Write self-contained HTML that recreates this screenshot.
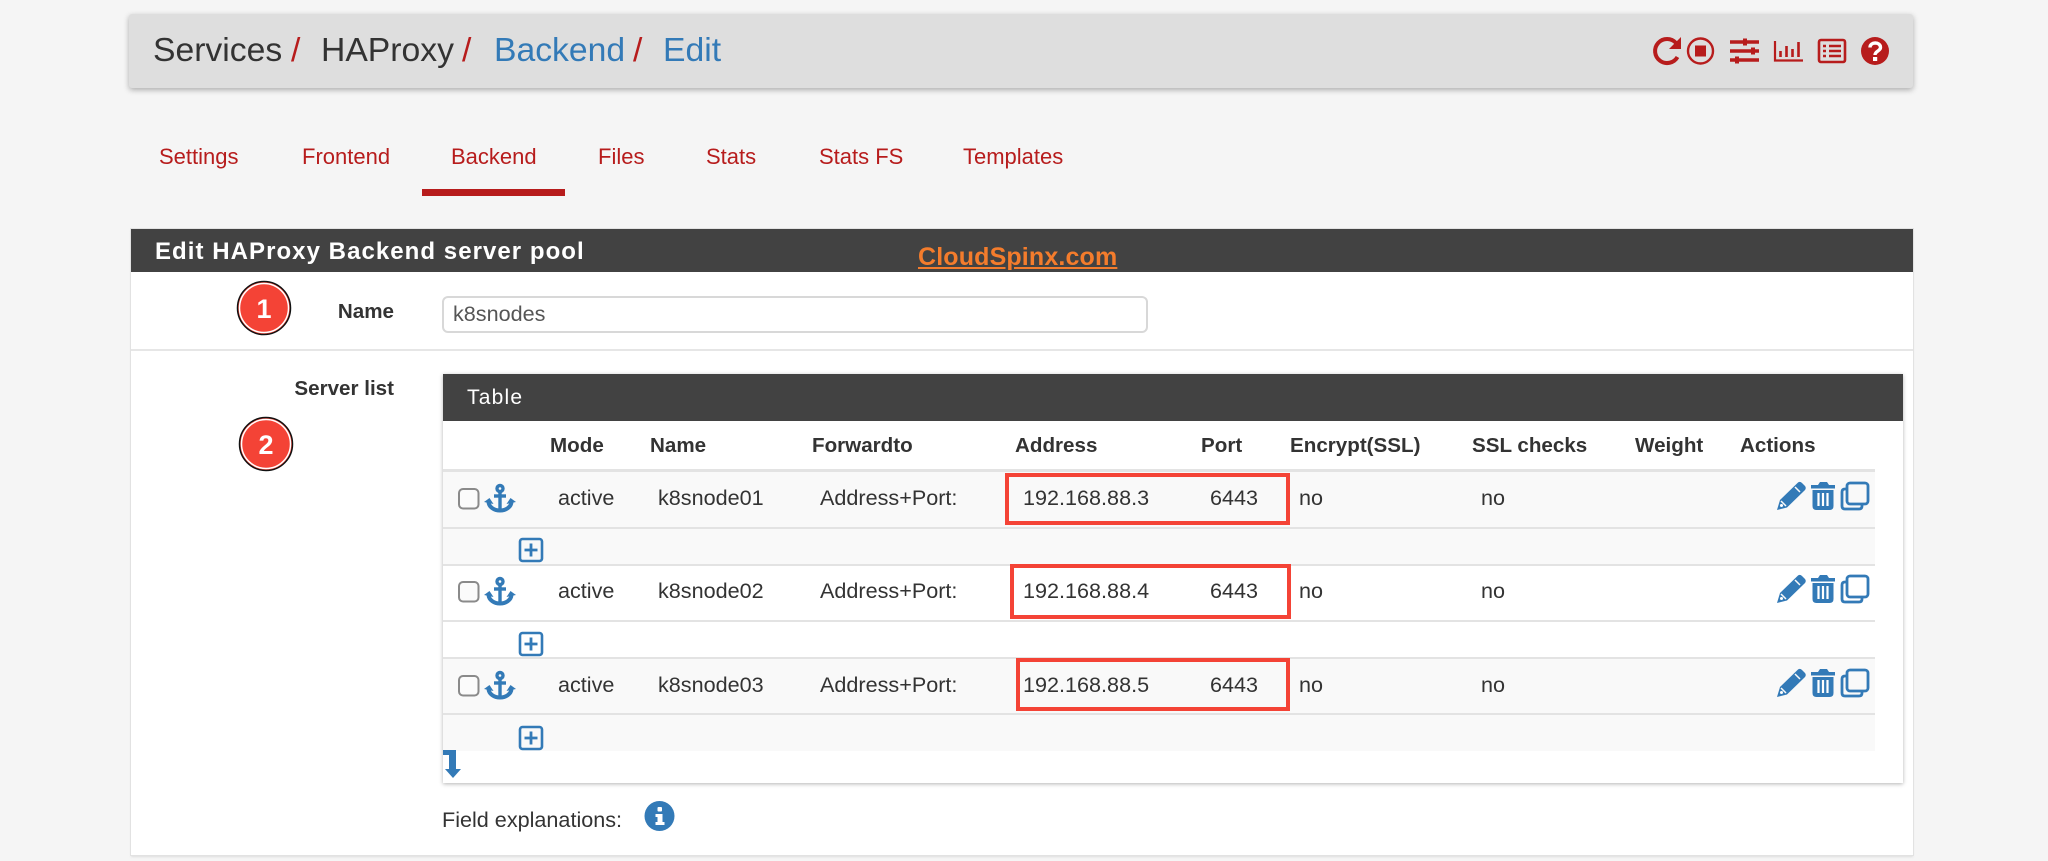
<!DOCTYPE html>
<html><head><meta charset="utf-8"><title>HAProxy Backend Edit</title>
<style>
html,body{margin:0;padding:0;background:#f5f5f5;width:2048px;height:861px;overflow:hidden}
body{position:relative;font-family:"Liberation Sans",sans-serif;color:#333;font-size:21.6px}
.b{position:absolute}
.t{position:absolute;white-space:nowrap;line-height:30px}
.h{font-weight:bold;font-size:20.6px}
.tab{color:#b71c1c;font-size:22px}
.crumb{font-size:33.7px;line-height:40px}
.red{color:#b71c1c}.blue{color:#337ab7}
.line{position:absolute;height:2px;background:#e3e3e3;left:443px;width:1432px}
.redbox{position:absolute;box-sizing:border-box;border:4px solid #f44336}
svg{position:absolute;left:0;top:0}
</style></head><body>
<div class="b" style="left:129px;top:14px;width:1784px;height:74px;background:#dedede;border-radius:3px;box-shadow:0 2px 6px rgba(0,0,0,.3)"></div>
<div class="t crumb" style="left:153px;top:30px">Services</div>
<div class="t crumb red" style="left:291px;top:30px">/</div>
<div class="t crumb" style="left:321px;top:30px">HAProxy</div>
<div class="t crumb red" style="left:462px;top:30px">/</div>
<div class="t crumb blue" style="left:494px;top:30px">Backend</div>
<div class="t crumb red" style="left:633px;top:30px">/</div>
<div class="t crumb blue" style="left:663px;top:30px">Edit</div>

<div class="t tab" style="left:159px;top:142px">Settings</div>
<div class="t tab" style="left:302px;top:142px">Frontend</div>
<div class="t tab" style="left:451px;top:142px">Backend</div>
<div class="t tab" style="left:598px;top:142px">Files</div>
<div class="t tab" style="left:706px;top:142px">Stats</div>
<div class="t tab" style="left:819px;top:142px">Stats FS</div>
<div class="t tab" style="left:963px;top:142px">Templates</div>
<div class="b" style="left:422px;top:189px;width:143px;height:7px;background:#b71c1c"></div>

<div class="b" style="left:131px;top:229px;width:1782px;height:626px;background:#fff;box-shadow:0 0 0 1px #e2e2e2,0 2px 2px #ddd"></div>
<div class="b" style="left:131px;top:229px;width:1782px;height:43px;background:#424242"></div>
<div class="t h" style="left:155px;top:237px;color:#fff;font-size:24px;letter-spacing:1.05px">Edit HAProxy Backend server pool</div>
<div class="t h" style="left:918px;top:242px;color:#f47c2c;font-size:25px;text-decoration:underline;letter-spacing:.15px">CloudSpinx.com</div>
<div class="b" style="left:131px;top:349px;width:1782px;height:2px;background:#e6e6e6"></div>

<div class="t h" style="right:1654px;top:297px">Name</div>
<div class="t h" style="right:1654px;top:374px">Server list</div>
<div class="b" style="left:442px;top:296px;width:706px;height:37px;box-sizing:border-box;border:2px solid #d8d8d8;border-radius:6px;background:#fff"></div>
<div class="t" style="left:453px;top:299px;color:#555">k8snodes</div>

<div class="b" style="left:443px;top:374px;width:1460px;height:409px;background:#fff;box-shadow:0 1px 4px rgba(0,0,0,.3)"></div>
<div class="b" style="left:443px;top:374px;width:1460px;height:47px;background:#424242"></div>
<div class="t" style="left:467px;top:383px;color:#fff;font-size:21px;letter-spacing:1.2px">Table</div>

<div class="t h" style="left:550px;top:431px">Mode</div>
<div class="t h" style="left:650px;top:431px">Name</div>
<div class="t h" style="left:812px;top:431px">Forwardto</div>
<div class="t h" style="left:1015px;top:431px">Address</div>
<div class="t h" style="left:1201px;top:431px">Port</div>
<div class="t h" style="left:1290px;top:431px">Encrypt(SSL)</div>
<div class="t h" style="left:1472px;top:431px">SSL checks</div>
<div class="t h" style="left:1635px;top:431px">Weight</div>
<div class="t h" style="left:1740px;top:431px">Actions</div>

<div class="b" style="left:443px;top:471px;width:1432px;height:94px;background:#f9f9f9"></div>
<div class="b" style="left:443px;top:658px;width:1432px;height:93px;background:#f9f9f9"></div>
<div class="line" style="top:469px;height:3px"></div>
<div class="line" style="top:527px"></div>
<div class="line" style="top:564px"></div>
<div class="line" style="top:620px"></div>
<div class="line" style="top:657px"></div>
<div class="line" style="top:713px"></div>

<div class="t" style="left:558px;top:483px">active</div>
<div class="t" style="left:658px;top:483px">k8snode01</div>
<div class="t" style="left:820px;top:483px">Address+Port:</div>
<div class="t" style="left:1023px;top:483px">192.168.88.3</div>
<div class="t" style="left:1210px;top:483px">6443</div>
<div class="t" style="left:1299px;top:483px">no</div>
<div class="t" style="left:1481px;top:483px">no</div>

<div class="t" style="left:558px;top:576px">active</div>
<div class="t" style="left:658px;top:576px">k8snode02</div>
<div class="t" style="left:820px;top:576px">Address+Port:</div>
<div class="t" style="left:1023px;top:576px">192.168.88.4</div>
<div class="t" style="left:1210px;top:576px">6443</div>
<div class="t" style="left:1299px;top:576px">no</div>
<div class="t" style="left:1481px;top:576px">no</div>

<div class="t" style="left:558px;top:670px">active</div>
<div class="t" style="left:658px;top:670px">k8snode03</div>
<div class="t" style="left:820px;top:670px">Address+Port:</div>
<div class="t" style="left:1023px;top:670px">192.168.88.5</div>
<div class="t" style="left:1210px;top:670px">6443</div>
<div class="t" style="left:1299px;top:670px">no</div>
<div class="t" style="left:1481px;top:670px">no</div>

<div class="redbox" style="left:1005px;top:473px;width:285px;height:52px"></div>
<div class="redbox" style="left:1010px;top:564px;width:281px;height:55px"></div>
<div class="redbox" style="left:1016px;top:658px;width:274px;height:53px"></div>

<div class="t" style="left:442px;top:805px">Field explanations:</div>

<svg width="2048" height="861" viewBox="0 0 2048 861">
<defs>
<g id="rowicons">
  <rect x="459" y="489" width="19.500" height="19.500" rx="4" fill="#fbfbfb" stroke="#8a8a8a" stroke-width="2"/>
  <g fill="none" stroke="#337ab7" stroke-width="3.400">
    <circle cx="500" cy="488.500" r="3"/>
    <path d="M500 492V510"/>
    <path d="M494 496H506"/>
    <path d="M488.500 502C489 507 494 510.500 500 510.500C506 510.500 511 507 511.500 502" stroke-width="4"/>
  </g>
  <path d="M484 502L489.500 498L493.500 504ZM506.500 504L510.500 498L516 502Z" fill="#337ab7"/>
  <path d="M1777 510L1780 500L1798 482.500Q1800 481 1802 483L1805 486Q1806.500 488 1805 490L1787 507.500Z" fill="#337ab7"/>
  <path d="M1781 501L1786 506M1795 487L1800 492" stroke="#f9f9f9" stroke-width="1.500"/>
  <circle cx="1781.500" cy="505.500" r="1.500" fill="#fff"/>
  <path d="M1811 485H1818L1820 482H1827L1829 485H1835V488.500H1811ZM1812.500 490H1833.500V506Q1833.500 510 1829.500 510H1816.500Q1812.500 510 1812.500 506Z" fill="#337ab7"/>
  <path d="M1818.500 493V506M1823 493V506M1827.500 493V506" stroke="#fff" stroke-width="2.200"/>
  <rect x="1847" y="483" width="21" height="21" rx="3" fill="none" stroke="#337ab7" stroke-width="2.800"/>
  <path d="M1847 489H1845Q1842 489 1842 492V506Q1842 509 1845 509H1859Q1862 509 1862 506V504" fill="none" stroke="#337ab7" stroke-width="2.800"/>
</g>
<g id="plus">
  <rect x="520" y="727" width="22" height="22" rx="2.500" fill="none" stroke="#337ab7" stroke-width="2.600"/>
  <path d="M531 731.500V744.500M524.500 738H537.500" stroke="#337ab7" stroke-width="2.800"/>
</g>
</defs>

<!-- top bar icons -->
<g fill="none" stroke="#b71c1c">
  <path d="M1677.500 57A12 12 0 1 1 1676 43L1679 46" stroke-width="4"/>
  <circle cx="1700.500" cy="51" r="12.500" stroke-width="2.400"/>
  <path d="M1730 42H1759M1730 51H1759M1730 60H1759" stroke-width="3.400"/>
  <path d="M1745 38.500V45.500M1753 47.500V54.500M1737 56.500V63.500" stroke-width="4"/>
  <path d="M1775 41V60.500H1803" stroke-width="2.200"/>
  <path d="M1780.500 51V57M1786.500 46V57M1792.500 49V57M1798.500 42V57" stroke-width="2.600"/>
  <rect x="1819" y="40" width="26" height="22" rx="2" stroke-width="2.600"/>
  <path d="M1829 46H1841M1829 51H1841M1829 56H1841M1823 46H1826M1823 51H1826M1823 56H1826" stroke-width="2.600"/>
</g>
<path d="M1681 37V49H1669Z" fill="#b71c1c"/>
<rect x="1695" y="45.500" width="11" height="11" fill="#b71c1c"/>
<circle cx="1875" cy="51" r="14" fill="#b71c1c"/>
<path d="M1870 47.500C1870 41.500 1880.500 41.500 1880.500 47.500C1880.500 51 1875 51 1875 55" fill="none" stroke="#fff" stroke-width="3.400"/>
<rect x="1873" y="57" width="4.200" height="4" fill="#fff"/>

<!-- badges -->
<g>
  <circle cx="264" cy="308" r="26.500" fill="#f44336" stroke="#111" stroke-width="1.500"/>
  <circle cx="264" cy="308" r="24.500" fill="#f44336" stroke="#fff" stroke-width="1.500"/>
  <circle cx="266" cy="444" r="26.500" fill="#f44336" stroke="#111" stroke-width="1.500"/>
  <circle cx="266" cy="444" r="24.500" fill="#f44336" stroke="#fff" stroke-width="1.500"/>
  <text x="264" y="318" text-anchor="middle" font-family="Liberation Sans" font-weight="bold" font-size="27" fill="#fff">1</text>
  <text x="266" y="454" text-anchor="middle" font-family="Liberation Sans" font-weight="bold" font-size="27" fill="#fff">2</text>
</g>

<use href="#rowicons"/>
<use href="#rowicons" y="93"/>
<use href="#rowicons" y="187"/>
<use href="#plus" y="-188"/>
<use href="#plus" y="-94"/>
<use href="#plus"/>

<!-- down arrow -->
<path d="M443 750H456V769H461L453 778L445 769H449V755H443Z" fill="#337ab7"/>

<!-- info -->
<circle cx="659.500" cy="816" r="15" fill="#337ab7"/>
<rect x="657.500" y="807" width="4.500" height="4.500" rx="1" fill="#fff"/>
<path d="M655.500 814H662.500V822H664.500V825H655.500V822H657.500V817H655.500Z" fill="#fff"/>
</svg>
</body></html>
